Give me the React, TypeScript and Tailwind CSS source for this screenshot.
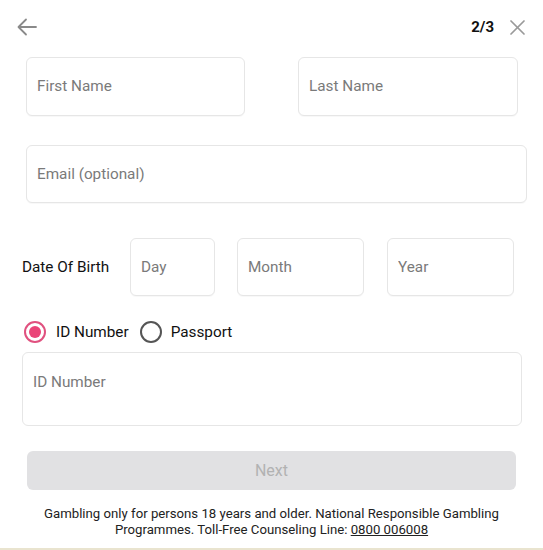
import React from "react";

const inputCls =
  "h-full w-full rounded-[6px] border border-[#e6e6e6] bg-white px-[10px] pb-[1px] text-[15.3px] text-[#222] placeholder:text-[#7a7a7a] outline-none shadow-[0_1px_1px_rgba(0,0,0,0.03)]";

export default function App() {
  return (
    <div
      className="w-[543px] h-[550px] bg-white flex flex-col relative overflow-hidden border-b-2 border-[#e9e4cf]"
      style={{ fontFamily: "Roboto, 'Liberation Sans', sans-serif" }}
    >
      {/* header */}
      <div className="h-[54px] flex items-center justify-between pl-[17px] pr-[18px]">
        <svg width="20" height="18" viewBox="0 0 20 18" fill="none" stroke="#8a8a8a" strokeWidth="1.8" strokeLinecap="round" strokeLinejoin="round">
          <path d="M19 9H2" />
          <path d="M9 1.5L1.5 9L9 16.5" />
        </svg>
        <div className="flex items-center gap-[16px]">
          <span className="text-[15px] font-bold text-[#111]">2/3</span>
          <svg width="15" height="15" viewBox="0 0 15 15" fill="none" stroke="#9a9a9a" strokeWidth="1.7" strokeLinecap="round">
            <path d="M1 1L14 14" />
            <path d="M14 1L1 14" />
          </svg>
        </div>
      </div>

      {/* name row */}
      <div className="flex h-[59px] mt-[3px] pl-[26px]">
        <div className="w-[219px] h-full">
          <input className={inputCls} placeholder="First Name" />
        </div>
        <div className="w-[220px] h-full ml-[53px]">
          <input className={inputCls} placeholder="Last Name" />
        </div>
      </div>

      {/* email */}
      <div className="h-[58px] mt-[29px] pl-[26px]">
        <div className="w-[501px] h-full">
          <input className={inputCls} placeholder="Email (optional)" />
        </div>
      </div>

      {/* DOB */}
      <div className="flex items-center h-[58px] mt-[35px] pl-[22px]">
        <span className="w-[108px] text-[15.3px] text-[#111]">Date Of Birth</span>
        <div className="w-[85px] h-full">
          <input className={inputCls} placeholder="Day" />
        </div>
        <div className="w-[127px] h-full ml-[22px]">
          <input className={inputCls} placeholder="Month" />
        </div>
        <div className="w-[127px] h-full ml-[23px]">
          <input className={inputCls} placeholder="Year" />
        </div>
      </div>

      {/* radio row */}
      <div className="flex items-center h-[24px] mt-[24px] pl-[24px]">
        <label className="flex items-center">
          <span className="w-[22px] h-[22px] rounded-full border-[2px] border-[#e0517f] flex items-center justify-center">
            <span className="w-[12px] h-[12px] rounded-full bg-[#ea4478]" />
          </span>
          <span className="ml-[10px] text-[15.3px] text-[#111]">ID Number</span>
        </label>
        <label className="flex items-center ml-[11px]">
          <span className="w-[22px] h-[22px] rounded-full border-[2px] border-[#555]" />
          <span className="ml-[9px] text-[15.3px] text-[#111]">Passport</span>
        </label>
      </div>

      {/* id box */}
      <div className="h-[74px] mt-[8px] pl-[22px]">
        <div className="w-[500px] h-full rounded-[6px] border border-[#e6e6e6] bg-white px-[10px] pt-[17px]">
          <span className="text-[15.3px] text-[#7a7a7a]">ID Number</span>
        </div>
      </div>

      {/* next */}
      <div className="h-[39px] mt-[25px] pl-[27px]">
        <button className="w-[489px] h-full rounded-[6px] bg-[#e1e1e3] text-[16px] text-[#b2b2b2]">
          Next
        </button>
      </div>

      {/* footer */}
      <div className="mt-[16px] text-center text-[13.2px] leading-[16px] text-[#222] px-[10px] whitespace-nowrap">
        Gambling only for persons 18 years and older. National Responsible Gambling
        <br />
        Programmes. Toll-Free Counseling Line: <span className="underline">0800 006008</span>
      </div>
    </div>
  );
}
